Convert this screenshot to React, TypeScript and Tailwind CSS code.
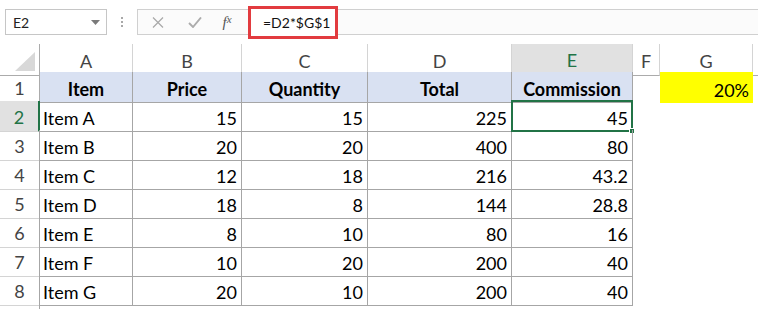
import React from "react";

const COLS = "grid grid-cols-[40px_93px_109px_126px_144px_121px_27px_93px_1fr]";

const rows: [string, number, number, number, string][] = [
  ["Item A", 15, 15, 225, "45"],
  ["Item B", 20, 20, 400, "80"],
  ["Item C", 12, 18, 216, "43.2"],
  ["Item D", 18, 8, 144, "28.8"],
  ["Item E", 8, 10, 80, "16"],
  ["Item F", 10, 20, 200, "40"],
  ["Item G", 20, 10, 200, "40"],
];

const letters = ["A", "B", "C", "D", "E", "F", "G"];

function Toolbar() {
  return (
    <div className="flex h-[44px] items-start pt-[9px]">
      {/* NAME BOX */}
      <div className="ml-[5px] flex h-[26px] w-[102px] items-center justify-between border border-[#c6c6c6] pl-[7px] pr-[6px]">
        <span className="text-[14px] text-[#222]">E2</span>
        <svg width="9" height="5" viewBox="0 0 9 5">
          <path d="M0 0 L9 0 L4.5 5 Z" fill="#7a7a7a" />
        </svg>
      </div>

      {/* GRIP */}
      <div className="flex h-[26px] w-[30px] flex-col items-center justify-center gap-[2px]">
        <span className="h-[2px] w-[2px] bg-[#a8a8a8]" />
        <span className="h-[2px] w-[2px] bg-[#a8a8a8]" />
        <span className="h-[2px] w-[2px] bg-[#a8a8a8]" />
      </div>

      {/* FORMULA BAR */}
      <div className="flex h-[26px] flex-1 items-center border-y border-l border-[#d0d0d0] bg-[#fbfbfb]">
        <span className="flex w-[40px] justify-center">
          <svg width="12" height="11" viewBox="0 0 12 11">
            <path d="M1 0.5 L11 10.5 M11 0.5 L1 10.5" stroke="#a8a8a8" strokeWidth="1.2" />
          </svg>
        </span>
        <span className="flex w-[34px] justify-center">
          <svg width="14" height="11" viewBox="0 0 14 11">
            <path d="M1 6 L5 10 L13 0.5" stroke="#acacac" strokeWidth="1.9" fill="none" />
          </svg>
        </span>
        <span className="flex w-[30px] justify-center font-['Liberation_Serif',serif] text-[15px] italic text-[#555]">
          f<span className="text-[11px]">x</span>
        </span>
        <div className="ml-[6px] flex h-[33px] w-[90px] items-center border-[3px] border-[#e23b3f] bg-white pl-[12px]">
          <span className="text-[14px] text-[#111]">=D2*$G$1</span>
        </div>
      </div>
    </div>
  );
}

export default function App() {
  return (
    <div className="h-[309px] w-[758px] overflow-hidden bg-white font-['Lato',sans-serif] text-black">
      <Toolbar />

      {/* COLUMN HEADERS */}
      <div className={`${COLS} h-[28px]`}>
        <div className="flex items-end justify-end border-r border-b border-[#ababab] pr-[4px] pb-[4px]">
          <svg width="20" height="19" viewBox="0 0 20 19">
            <path d="M20 0 L20 19 L0 19 Z" fill="#d8d8d8" />
          </svg>
        </div>
        {letters.map((l) => (
          <div
            key={l}
            className={
              l === "E"
                ? "flex items-center justify-center border-r border-[#d4d4d4] border-b-2 border-b-[#217346] bg-[#e1e1e1] pt-[3px] text-[18px] text-[#217346]"
                : "flex items-center justify-center border-r border-b border-[#d4d4d4] border-b-[#ababab] pt-[3px] text-[18px] text-[#444]"
            }
          >
            {l}
          </div>
        ))}
        <div className="border-b border-[#ababab]" />
      </div>

      {/* ROW 1 */}
      <div className={`${COLS} h-[29px]`}>
        <div className="flex items-center justify-center border-r border-b border-[#ababab] border-b-[#d4d4d4] pt-[3px] text-[18px] text-[#444]">
          1
        </div>
        {["Item", "Price", "Quantity", "Total", "Commission"].map((h) => (
          <div
            key={h}
            className="flex items-end justify-center border-r border-b border-[#a6a6a6] bg-[#d9e1f2] text-[18px] leading-[25px] font-bold"
          >
            {h}
          </div>
        ))}
        <div />
        <div className="flex items-end justify-end bg-[#ffff00] pr-[4px] text-[18px] leading-[25px]">20%</div>
        <div />
      </div>

      {/* DATA ROWS */}
      {rows.map(([item, price, qty, total, comm], i) => {
        const active = i === 0;
        return (
          <div key={item} className={`${COLS} h-[29px]`}>
            <div
              className={
                active
                  ? "flex items-center justify-center border-r-2 border-b border-r-[#217346] border-b-[#d4d4d4] bg-[#e1e1e1] pt-[3px] text-[18px] text-[#217346]"
                  : "flex items-center justify-center border-r border-b border-[#a6a6a6] border-b-[#d4d4d4] pt-[3px] text-[18px] text-[#444]"
              }
            >
              {i + 2}
            </div>
            <div className="flex items-end border-r border-b border-[#a6a6a6] pl-[3px] text-[18px] leading-[25px]">{item}</div>
            <div className="flex items-end justify-end border-r border-b border-[#a6a6a6] pr-[4px] text-[18px] leading-[25px]">{price}</div>
            <div className="flex items-end justify-end border-r border-b border-[#a6a6a6] pr-[4px] text-[18px] leading-[25px]">{qty}</div>
            <div className="flex items-end justify-end border-r border-b border-[#a6a6a6] pr-[4px] text-[18px] leading-[25px]">{total}</div>
            <div className="relative flex items-end justify-end border-r border-b border-[#a6a6a6] pr-[4px] text-[18px] leading-[25px]">
              {comm}
              {active && (
                <>
                  <div className="absolute -top-[1px] -left-[1px] -right-[1px] -bottom-[1px] border-2 border-[#217346]" />
                  <div className="absolute -right-[3px] -bottom-[3px] h-[6px] w-[6px] border border-white bg-[#217346]" />
                </>
              )}
            </div>
            <div />
            <div />
            <div />
          </div>
        );
      })}

      {/* ROW 9 (partly visible) */}
      <div className={`${COLS} h-[29px]`}>
        <div className="border-r border-[#a6a6a6]" />
      </div>
    </div>
  );
}
